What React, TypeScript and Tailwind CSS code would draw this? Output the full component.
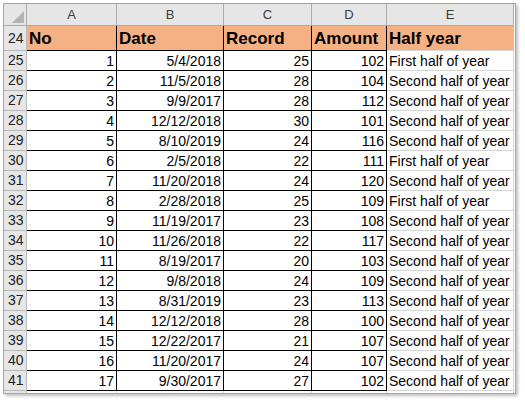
import React from 'react';

const rows: [number, string, number, number, string][] = [
  [1, '5/4/2018', 25, 102, 'First half of year'],
  [2, '11/5/2018', 28, 104, 'Second half of year'],
  [3, '9/9/2017', 28, 112, 'Second half of year'],
  [4, '12/12/2018', 30, 101, 'Second half of year'],
  [5, '8/10/2019', 24, 116, 'Second half of year'],
  [6, '2/5/2018', 22, 111, 'First half of year'],
  [7, '11/20/2018', 24, 120, 'Second half of year'],
  [8, '2/28/2018', 25, 109, 'First half of year'],
  [9, '11/19/2017', 23, 108, 'Second half of year'],
  [10, '11/26/2018', 22, 117, 'Second half of year'],
  [11, '8/19/2017', 20, 103, 'Second half of year'],
  [12, '9/8/2018', 24, 109, 'Second half of year'],
  [13, '8/31/2019', 23, 113, 'Second half of year'],
  [14, '12/12/2018', 28, 100, 'Second half of year'],
  [15, '12/22/2017', 21, 107, 'Second half of year'],
  [16, '11/20/2017', 24, 107, 'Second half of year'],
  [17, '9/30/2017', 27, 102, 'Second half of year'],
];

const cols = ['A', 'B', 'C', 'D', 'E'];
const widths = ['w-[90px]', 'w-[107px]', 'w-[88px]', 'w-[75px]', 'w-[127px]'];

const App: React.FC = () => {
  return (
    <div className="w-[525px] h-[400px] bg-white pl-[3px] pt-[3px] font-['Liberation_Sans',Arial,sans-serif]">
      <div className="w-[513px] h-[391px] overflow-hidden border border-[#a6a6a6] bg-white shadow-[2px_2px_3px_rgba(0,0,0,0.25)]">
        {/* column letters */}
        <div className="flex h-[22px]">
          <div className="w-[23px] shrink-0 bg-[#e6e6e6] border-r border-b border-[#ababab] flex items-end justify-end pr-[2px] pb-[2px]">
            <svg width="12" height="12" viewBox="0 0 12 12">
              <polygon points="12,0 12,12 0,12" fill="#b4b4b4" />
            </svg>
          </div>
          {cols.map((c, i) => (
            <div
              key={c}
              className={`${widths[i]} shrink-0 bg-[#e6e6e6] border-r border-b border-[#ababab] flex items-center justify-center text-[13px] text-[#3c3c3c]`}
            >
              {c}
            </div>
          ))}
        </div>

        {/* header row */}
        <div className="flex h-[25px]">
          <div className="w-[23px] shrink-0 bg-[#e6e6e6] border-r border-b border-[#b8b8b8] flex items-center pl-[4px] text-[14px] text-[#222]">
            24
          </div>
          {['No', 'Date', 'Record', 'Amount', 'Half year'].map((h, i) => (
            <div
              key={h}
              className={`${widths[i]} shrink-0 bg-[#f4b183] border-b flex items-center pl-[2px] pt-[1px] text-[17px] font-bold text-black ${
                i < 4 ? 'border-r border-black' : 'border-r border-[#f4b183] border-b-[#d4d4d4]'
              }`}
            >
              {h}
            </div>
          ))}
        </div>

        {rows.map((r, idx) => (
          <div key={idx} className="flex h-[20px]">
            <div className="w-[23px] shrink-0 bg-[#e6e6e6] border-r border-b border-[#b8b8b8] flex items-center pl-[4px] text-[14px] text-[#222]">
              {idx + 25}
            </div>
            {r.slice(0, 4).map((v, i) => (
              <div
                key={i}
                className={`${widths[i]} shrink-0 border-r border-b border-black flex items-center justify-end pr-[2px] pt-[1px] text-[14px] text-black`}
              >
                {v}
              </div>
            ))}
            <div className="w-[127px] shrink-0 border-r border-b border-[#d4d4d4] flex items-center pl-[2px] pt-[1px] text-[14px] text-black whitespace-nowrap">
              {r[4]}
            </div>
          </div>
        ))}
        <div className="flex h-[4px]">
          <div className="w-[23px] shrink-0 bg-[#e6e6e6] border-r border-[#b8b8b8]" />
          {widths.map((w, i) => (
            <div key={i} className={`${w} shrink-0 border-r border-[#d4d4d4]`} />
          ))}
        </div>
      </div>
    </div>
  );
};

export default App;
